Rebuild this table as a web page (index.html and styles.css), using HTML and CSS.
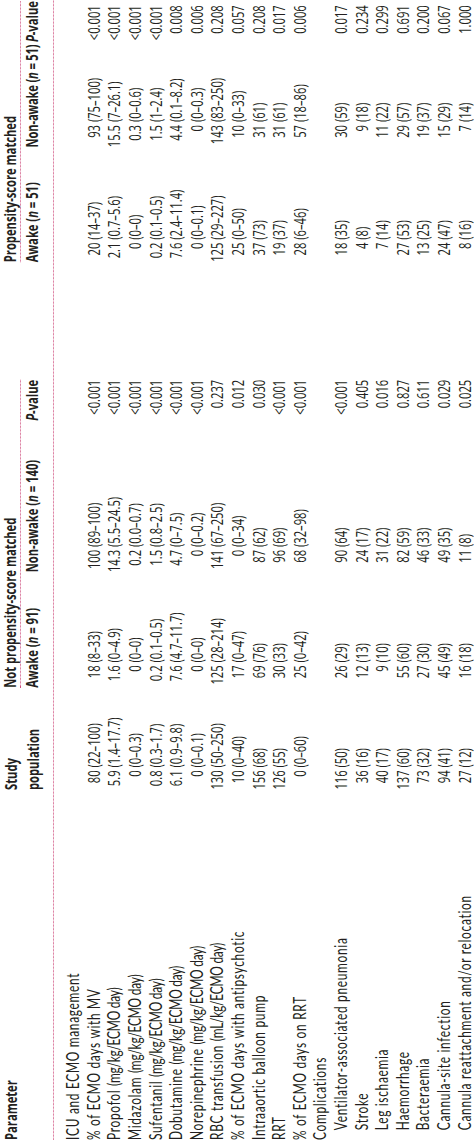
FILE: index.html
```html
<!DOCTYPE html>
<html>
<head>
<meta charset="utf-8">
<link rel="stylesheet" href="styles.css">
</head>
<body>
<div class="page">
  <div class="tbl">
    <div class="hdr">
      <div class="c1">Parameter</div>
      <div class="c2">Study<br>population</div>
      <div class="grp g1">
        <div class="gt">Not propensity-score matched</div>
        <div class="gs">
          <div class="c3">Awake (<i>n</i> = 91)</div>
          <div class="c4">Non-awake (<i>n</i> = 140)</div>
          <div class="c5"><i>P</i>-value</div>
        </div>
      </div>
      <div class="grp g2">
        <div class="gt">Propensity-score matched</div>
        <div class="gs">
          <div class="c7">Awake (<i>n</i> = 51)</div>
          <div class="c8">Non-awake (<i>n</i> = 51)</div>
          <div class="c9"><i>P</i>-value</div>
        </div>
      </div>
    </div>
    <div class="body">
      <div class="row"><div class="c1 lab">ICU and ECMO management</div></div>
      <div class="row"><div class="c1 lab">% of ECMO days with MV</div><div class="c2 num"><span class="i">80</span><span>(22–100)</span></div><div class="c3 num"><span class="i">18</span><span>(8–33)</span></div><div class="c4 num"><span class="i">100</span><span>(89–100)</span></div><div class="c5">&lt;0.001</div><div class="c7 num"><span class="i">20</span><span>(14–37)</span></div><div class="c8 num"><span class="i">93</span><span>(75–100)</span></div><div class="c9">&lt;0.001</div></div>
      <div class="row"><div class="c1 lab">Propofol <span class="u">(mg/kg/ECMO day)</span></div><div class="c2 num"><span class="i">5.9</span><span>(1.4–17.7)</span></div><div class="c3 num"><span class="i">1.6</span><span>(0–4.9)</span></div><div class="c4 num"><span class="i">14.3</span><span>(5.5–24.5)</span></div><div class="c5">&lt;0.001</div><div class="c7 num"><span class="i">2.1</span><span>(0.7–5.6)</span></div><div class="c8 num"><span class="i">15.5</span><span>(7–26.1)</span></div><div class="c9">&lt;0.001</div></div>
      <div class="row"><div class="c1 lab">Midazolam <span class="u">(mg/kg/ECMO day)</span></div><div class="c2 num"><span class="i">0</span><span>(0–0.3)</span></div><div class="c3 num"><span class="i">0</span><span>(0–0)</span></div><div class="c4 num"><span class="i">0.2</span><span>(0.0–0.7)</span></div><div class="c5">&lt;0.001</div><div class="c7 num"><span class="i">0</span><span>(0–0)</span></div><div class="c8 num"><span class="i">0.3</span><span>(0–0.6)</span></div><div class="c9">&lt;0.001</div></div>
      <div class="row"><div class="c1 lab">Sufentanil <span class="u">(mg/kg/ECMO day)</span></div><div class="c2 num"><span class="i">0.8</span><span>(0.3–1.7)</span></div><div class="c3 num"><span class="i">0.2</span><span>(0.1–0.5)</span></div><div class="c4 num"><span class="i">1.5</span><span>(0.8–2.5)</span></div><div class="c5">&lt;0.001</div><div class="c7 num"><span class="i">0.2</span><span>(0.1–0.5)</span></div><div class="c8 num"><span class="i">1.5</span><span>(1–2.4)</span></div><div class="c9">&lt;0.001</div></div>
      <div class="row"><div class="c1 lab">Dobutamine <span class="u">(mg/kg/ECMO day)</span></div><div class="c2 num"><span class="i">6.1</span><span>(0.9–9.8)</span></div><div class="c3 num"><span class="i">7.6</span><span>(4.7–11.7)</span></div><div class="c4 num"><span class="i">4.7</span><span>(0–7.5)</span></div><div class="c5">&lt;0.001</div><div class="c7 num"><span class="i">7.6</span><span>(2.4–11.4)</span></div><div class="c8 num"><span class="i">4.4</span><span>(0.1–8.2)</span></div><div class="c9">0.008</div></div>
      <div class="row"><div class="c1 lab">Norepinephrine <span class="u">(mg/kg/ECMO day)</span></div><div class="c2 num"><span class="i">0</span><span>(0–0.1)</span></div><div class="c3 num"><span class="i">0</span><span>(0–0)</span></div><div class="c4 num"><span class="i">0</span><span>(0–0.2)</span></div><div class="c5">&lt;0.001</div><div class="c7 num"><span class="i">0</span><span>(0–0.1)</span></div><div class="c8 num"><span class="i">0</span><span>(0–0.3)</span></div><div class="c9">0.006</div></div>
      <div class="row"><div class="c1 lab">RBC transfusion <span class="u">(mL/kg/ECMO day)</span></div><div class="c2 num"><span class="i">130</span><span>(50–250)</span></div><div class="c3 num"><span class="i">125</span><span>(28–214)</span></div><div class="c4 num"><span class="i">141</span><span>(67–250)</span></div><div class="c5">0.237</div><div class="c7 num"><span class="i">125</span><span>(29–227)</span></div><div class="c8 num"><span class="i">143</span><span>(83–250)</span></div><div class="c9">0.208</div></div>
      <div class="row"><div class="c1 lab">% of ECMO days with antipsychotic</div><div class="c2 num"><span class="i">10</span><span>(0–40)</span></div><div class="c3 num"><span class="i">17</span><span>(0–47)</span></div><div class="c4 num"><span class="i">0</span><span>(0–34)</span></div><div class="c5">0.012</div><div class="c7 num"><span class="i">25</span><span>(0–50)</span></div><div class="c8 num"><span class="i">10</span><span>(0–33)</span></div><div class="c9">0.057</div></div>
      <div class="row"><div class="c1 lab">Intraaortic balloon pump</div><div class="c2 num"><span class="i">156</span><span>(68)</span></div><div class="c3 num"><span class="i">69</span><span>(76)</span></div><div class="c4 num"><span class="i">87</span><span>(62)</span></div><div class="c5">0.030</div><div class="c7 num"><span class="i">37</span><span>(73)</span></div><div class="c8 num"><span class="i">31</span><span>(61)</span></div><div class="c9">0.208</div></div>
      <div class="row"><div class="c1 lab">RRT</div><div class="c2 num"><span class="i">126</span><span>(55)</span></div><div class="c3 num"><span class="i">30</span><span>(33)</span></div><div class="c4 num"><span class="i">96</span><span>(69)</span></div><div class="c5">&lt;0.001</div><div class="c7 num"><span class="i">19</span><span>(37)</span></div><div class="c8 num"><span class="i">31</span><span>(61)</span></div><div class="c9">0.017</div></div>
      <div class="row"><div class="c1 lab">% of ECMO days on RRT</div><div class="c2 num"><span class="i">0</span><span>(0–60)</span></div><div class="c3 num"><span class="i">25</span><span>(0–42)</span></div><div class="c4 num"><span class="i">68</span><span>(32–98)</span></div><div class="c5">&lt;0.001</div><div class="c7 num"><span class="i">28</span><span>(6–46)</span></div><div class="c8 num"><span class="i">57</span><span>(18–86)</span></div><div class="c9">0.006</div></div>
      <div class="row"><div class="c1 lab">Complications</div></div>
      <div class="row"><div class="c1 lab sub">Ventilator-associated pneumonia</div><div class="c2 num"><span class="i">116</span><span>(50)</span></div><div class="c3 num"><span class="i">26</span><span>(29)</span></div><div class="c4 num"><span class="i">90</span><span>(64)</span></div><div class="c5">&lt;0.001</div><div class="c7 num"><span class="i">18</span><span>(35)</span></div><div class="c8 num"><span class="i">30</span><span>(59)</span></div><div class="c9">0.017</div></div>
      <div class="row"><div class="c1 lab sub">Stroke</div><div class="c2 num"><span class="i">36</span><span>(16)</span></div><div class="c3 num"><span class="i">12</span><span>(13)</span></div><div class="c4 num"><span class="i">24</span><span>(17)</span></div><div class="c5">0.405</div><div class="c7 num"><span class="i">4</span><span>(8)</span></div><div class="c8 num"><span class="i">9</span><span>(18)</span></div><div class="c9">0.234</div></div>
      <div class="row"><div class="c1 lab sub">Leg ischaemia</div><div class="c2 num"><span class="i">40</span><span>(17)</span></div><div class="c3 num"><span class="i">9</span><span>(10)</span></div><div class="c4 num"><span class="i">31</span><span>(22)</span></div><div class="c5">0.016</div><div class="c7 num"><span class="i">7</span><span>(14)</span></div><div class="c8 num"><span class="i">11</span><span>(22)</span></div><div class="c9">0.299</div></div>
      <div class="row"><div class="c1 lab sub">Haemorrhage</div><div class="c2 num"><span class="i">137</span><span>(60)</span></div><div class="c3 num"><span class="i">55</span><span>(60)</span></div><div class="c4 num"><span class="i">82</span><span>(59)</span></div><div class="c5">0.827</div><div class="c7 num"><span class="i">27</span><span>(53)</span></div><div class="c8 num"><span class="i">29</span><span>(57)</span></div><div class="c9">0.691</div></div>
      <div class="row"><div class="c1 lab sub">Bacteraemia</div><div class="c2 num"><span class="i">73</span><span>(32)</span></div><div class="c3 num"><span class="i">27</span><span>(30)</span></div><div class="c4 num"><span class="i">46</span><span>(33)</span></div><div class="c5">0.611</div><div class="c7 num"><span class="i">13</span><span>(25)</span></div><div class="c8 num"><span class="i">19</span><span>(37)</span></div><div class="c9">0.200</div></div>
      <div class="row"><div class="c1 lab sub">Cannula-site infection</div><div class="c2 num"><span class="i">94</span><span>(41)</span></div><div class="c3 num"><span class="i">45</span><span>(49)</span></div><div class="c4 num"><span class="i">49</span><span>(35)</span></div><div class="c5">0.029</div><div class="c7 num"><span class="i">24</span><span>(47)</span></div><div class="c8 num"><span class="i">15</span><span>(29)</span></div><div class="c9">0.067</div></div>
      <div class="row"><div class="c1 lab sub">Cannula reattachment and/or relocation</div><div class="c2 num"><span class="i">27</span><span>(12)</span></div><div class="c3 num"><span class="i">16</span><span>(18)</span></div><div class="c4 num"><span class="i">11</span><span>(8)</span></div><div class="c5">0.025</div><div class="c7 num"><span class="i">8</span><span>(16)</span></div><div class="c8 num"><span class="i">7</span><span>(14)</span></div><div class="c9">1.000</div></div>
    </div>
  </div>
</div>
</body>
</html>
```
FILE: styles.css
```css
html, body {
  margin: 0;
  padding: 0;
  background: #ffffff;
}

.page {
  width: 474px;
  height: 1140px;
  overflow: hidden;
}

.tbl {
  width: 1629px;
  height: 474px;
  transform-origin: 0 0;
  transform: translateY(1140px) rotate(-90deg) scaleX(0.7);
  font-family: "Open Sans", "Liberation Sans", sans-serif;
  font-size: 16px;
  color: #231f20;
  white-space: nowrap;
}

.hdr {
  display: flex;
  height: 54px;
  box-sizing: border-box;
  border-bottom: 1px dotted #cf4f7f;
  font-weight: 700;
  line-height: 22px;
}

.hdr i {
  font-style: italic;
}

.grp {
  display: flex;
  flex-direction: column;
}

.g1 {
  width: 440px;
}

.g2 {
  width: 373px;
  margin-left: 168px;
}

.gt {
  line-height: 20px;
  height: 20px;
  border-bottom: 1px dotted #cf4f7f;
}

.gs {
  display: flex;
}

.body {
  padding-top: 9px;
}

.row {
  display: flex;
  align-items: center;
  height: 20.6px;
  line-height: 14px;
}

.c1 { width: 500px; flex: none; }
.c2 { width: 146px; flex: none; }
.c3 { width: 165px; flex: none; }
.c4 { width: 175px; flex: none; }
.c5 { width: 100px; flex: none; text-align: right; }
.c7 { width: 164px; flex: none; }
.c8 { width: 106px; flex: none; }
.c9 { width: 97px; flex: none; text-align: right; }

.hdr .c8 {
  letter-spacing: -0.25px;
}

.hdr .c9 {
  width: 103px;
}

.row .c7 {
  margin-left: 168px;
}

.lab {
  font-family: "Lato", "Open Sans", sans-serif;
  font-size: 17px;
  letter-spacing: 1px;
}

.lab .u {
  letter-spacing: -0.3px;
}

.sub {
  padding-left: 14px;
  box-sizing: border-box;
}

.num {
  display: flex;
}

.num .i {
  width: 1.75em;
  margin-right: 0.26em;
  text-align: right;
  flex: none;
}

.row .c3.num {
  padding-left: 4px;
  box-sizing: border-box;
}

.row .c4 .i,
.row .c8 .i {
  width: 2em;
}
```
